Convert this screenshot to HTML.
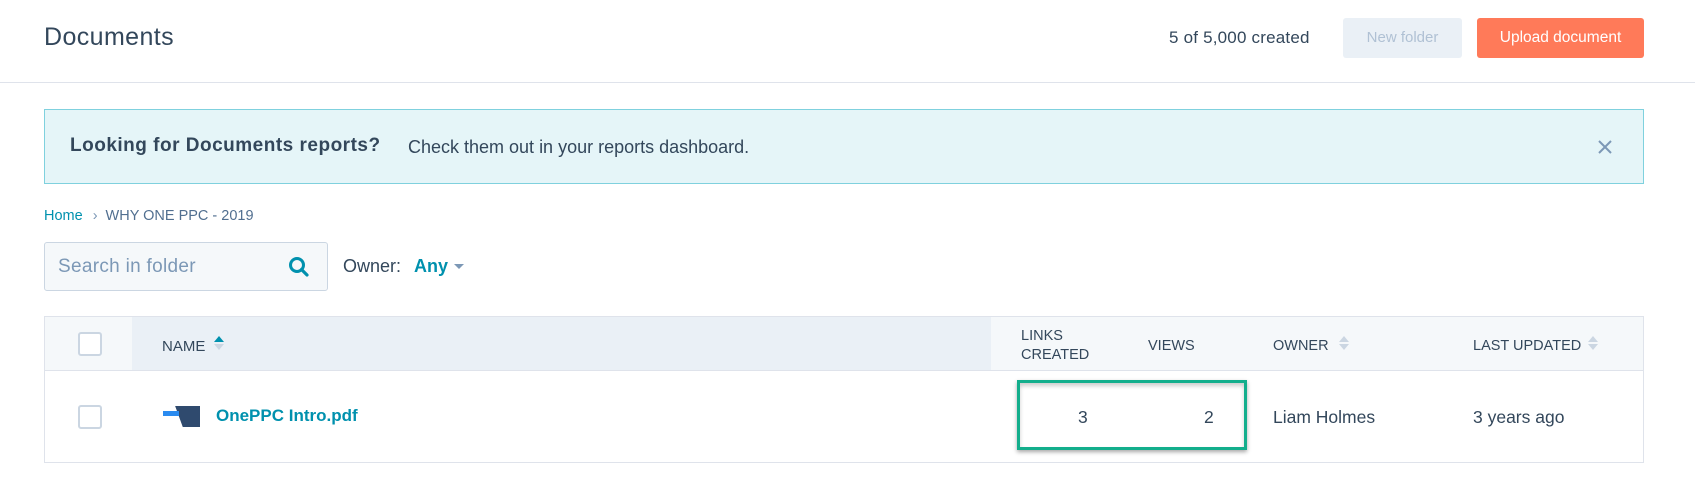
<!DOCTYPE html>
<html><head><meta charset="utf-8"><style>
*{box-sizing:border-box;margin:0;padding:0}
body{width:1695px;height:503px;background:#fff;font-family:"Liberation Sans",sans-serif;color:#33475b;position:relative;overflow:hidden}
.a{position:absolute;white-space:nowrap}
</style></head><body>
<div class="a" style="left:44px;top:22px;font-size:25px;line-height:30px;color:#33475b;letter-spacing:0.4px">Documents</div>
<div class="a" style="left:1169px;top:27px;font-size:17px;line-height:22px;letter-spacing:0.2px">5 of 5,000 created</div>
<div class="a" style="left:1343px;top:18px;width:119px;height:40px;background:#eaf0f6;border-radius:3px;color:#b0c1d4;font-size:15px;line-height:40px;text-align:center">New folder</div>
<div class="a" style="left:1477px;top:18px;width:167px;height:40px;background:#ff7a59;border-radius:3px;color:#fff;font-size:15.5px;line-height:40px;text-align:center">Upload document</div>
<div class="a" style="left:0;top:82px;width:1695px;height:1px;background:#dfe3eb"></div>

<div class="a" style="left:44px;top:109px;width:1600px;height:75px;background:#e5f5f8;border:1px solid #7fd1de"></div>
<div class="a" style="left:70px;top:134px;font-size:19px;line-height:24px;font-weight:bold;color:#33475b;letter-spacing:0.5px">Looking for Documents reports?</div>
<div class="a" style="left:408px;top:135px;font-size:18px;line-height:24px">Check them out in your reports dashboard.</div>
<svg class="a" style="left:1597px;top:139px" width="16" height="16" viewBox="0 0 16 16"><path d="M2 2L14 14M14 2L2 14" stroke="#7c98b6" stroke-width="2"/></svg>

<div class="a" style="left:44px;top:207px;font-size:14.5px;line-height:18px"><span style="color:#0091ae">Home</span><span style="color:#7c98b6;margin:0 8px 0 10px">›</span><span style="color:#516f90">WHY ONE PPC - 2019</span></div>

<div class="a" style="left:44px;top:242px;width:284px;height:49px;background:#f5f8fa;border:1px solid #cbd6e2;border-radius:3px"></div>
<div class="a" style="left:58px;top:255px;font-size:19px;line-height:24px;color:#7c98b6;letter-spacing:0.3px">Search in folder</div>
<svg class="a" style="left:288px;top:256px" width="22" height="22" viewBox="0 0 22 22"><circle cx="9" cy="9" r="6.5" fill="none" stroke="#0091ae" stroke-width="3"/><path d="M13.5 13.5L19 19" stroke="#0091ae" stroke-width="3.2" stroke-linecap="round"/></svg>
<div class="a" style="left:343px;top:254px;font-size:18px;line-height:24px">Owner:</div>
<div class="a" style="left:414px;top:254px;font-size:18px;line-height:24px;color:#0091ae;font-weight:bold">Any</div>
<div class="a" style="left:454px;top:264px;width:0;height:0;border-left:5px solid transparent;border-right:5px solid transparent;border-top:5px solid #7c98b6"></div>

<div class="a" style="left:44px;top:316px;width:1600px;height:147px;border:1px solid #dfe3eb"></div>
<div class="a" style="left:45px;top:317px;width:1598px;height:54px;background:#f5f8fa;border-bottom:1px solid #dfe3eb"></div>
<div class="a" style="left:132px;top:317px;width:859px;height:54px;background:#eaf0f6;border-bottom:1px solid #dfe3eb"></div>
<div class="a" style="left:78px;top:332px;width:24px;height:24px;border:2px solid #cbd6e2;border-radius:3px;background:#fff"></div>
<div class="a" style="left:162px;top:337px;font-size:15px;line-height:19px">NAME</div>
<div class="a" style="left:214px;top:336px;width:0;height:0;border-left:5px solid transparent;border-right:5px solid transparent;border-bottom:6px solid #0091ae"></div>
<div class="a" style="left:214px;top:344px;width:0;height:0;border-left:5px solid transparent;border-right:5px solid transparent;border-top:6px solid #cbd6e2"></div>
<div class="a" style="left:1021px;top:327px;font-size:14.5px;line-height:19px">LINKS<br>CREATED</div>
<div class="a" style="left:1148px;top:337px;font-size:14.5px;line-height:19px">VIEWS</div>
<div class="a" style="left:1273px;top:337px;font-size:14.5px;line-height:19px">OWNER</div>
<div class="a" style="left:1339px;top:336px;width:0;height:0;border-left:5px solid transparent;border-right:5px solid transparent;border-bottom:6px solid #cbd6e2"></div>
<div class="a" style="left:1339px;top:344px;width:0;height:0;border-left:5px solid transparent;border-right:5px solid transparent;border-top:6px solid #cbd6e2"></div>
<div class="a" style="left:1473px;top:337px;font-size:14.5px;line-height:19px">LAST UPDATED</div>
<div class="a" style="left:1588px;top:336px;width:0;height:0;border-left:5px solid transparent;border-right:5px solid transparent;border-bottom:6px solid #cbd6e2"></div>
<div class="a" style="left:1588px;top:344px;width:0;height:0;border-left:5px solid transparent;border-right:5px solid transparent;border-top:6px solid #cbd6e2"></div>

<div class="a" style="left:78px;top:405px;width:24px;height:24px;border:2px solid #cbd6e2;border-radius:3px;background:#fff"></div>
<div class="a" style="left:162px;top:406px;width:38px;height:21px;background:linear-gradient(70deg,#fff 0 45%,#2f4a6e 46%)"></div>
<div class="a" style="left:163px;top:411px;width:16px;height:5px;background:#2a8bf0"></div>
<div class="a" style="left:216px;top:405px;font-size:17px;line-height:22px;color:#0091ae;font-weight:bold">OnePPC Intro.pdf</div>

<div class="a" style="left:1017px;top:380px;width:230px;height:70px;border:3px solid #13ae8c;box-shadow:0 2px 4px rgba(0,0,0,.35), inset 0 3px 4px rgba(0,0,0,.2)"></div>
<div class="a" style="left:1078px;top:406px;font-size:17.5px;line-height:22px">3</div>
<div class="a" style="left:1204px;top:406px;font-size:17.5px;line-height:22px">2</div>
<div class="a" style="left:1273px;top:406px;font-size:17.5px;line-height:22px">Liam Holmes</div>
<div class="a" style="left:1473px;top:406px;font-size:17.5px;line-height:22px">3 years ago</div>
</body></html>
